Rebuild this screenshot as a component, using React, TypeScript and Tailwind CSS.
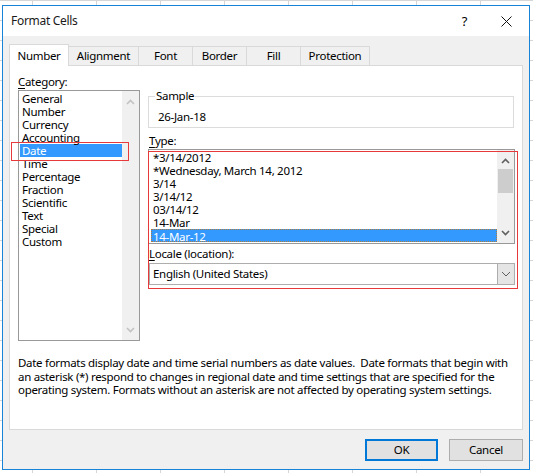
import React from 'react';

const categories = [
  'General',
  'Number',
  'Currency',
  'Accounting',
  'Date',
  'Time',
  'Percentage',
  'Fraction',
  'Scientific',
  'Text',
  'Special',
  'Custom',
];

const dateTypes = [
  '*3/14/2012',
  '*Wednesday, March 14, 2012',
  '3/14',
  '3/14/12',
  '03/14/12',
  '14-Mar',
  '14-Mar-12',
];

const tabs = ['Number', 'Alignment', 'Font', 'Border', 'Fill', 'Protection'];
const tabWidths: Record<string, string> = {
  Number: 'w-[60px]',
  Alignment: 'w-[70px]',
  Font: 'w-[54px]',
  Border: 'w-[54px]',
  Fill: 'w-[54px]',
  Protection: 'w-[69px]',
};

const Chevron = ({ up, color }: { up?: boolean; color: string }) => (
  <svg width="9" height="6" viewBox="0 0 9 6">
    <polyline
      points={up ? '1,5 4.5,1.5 8,5' : '1,1 4.5,4.5 8,1'}
      fill="none"
      stroke={color}
      strokeWidth="1.6"
    />
  </svg>
);

const ScrollBar = ({ disabled }: { disabled?: boolean }) => {
  const color = disabled ? '#c2c2c2' : '#5f5f5f';
  return (
    <div className="flex w-[17px] flex-col bg-[#f0f0f0]">
      <div className="flex h-[19px] items-center justify-center pt-[2px]">
        <Chevron up color={color} />
      </div>
      {!disabled && <div className="mx-[1px] h-[24px] bg-[#cdcdcd]" />}
      <div className="flex-1" />
      <div className="flex h-[19px] items-center justify-center pb-[2px]">
        <Chevron color={color} />
      </div>
    </div>
  );
};

const App = () => {
  return (
    <div className="relative h-[473px] w-[533px] overflow-hidden bg-white bg-[linear-gradient(to_right,#d6d6d6_1px,transparent_1px),linear-gradient(to_bottom,#d6d6d6_1px,transparent_1px)] bg-size-[64px_20px] bg-position-[32px_0px] pl-[2px] pt-[5px] font-['Noto_Sans',sans-serif] text-[11.5px] tracking-[-0.3px] text-black">
      <div className="flex h-[465px] w-[528px] flex-col border border-[#1883d7] bg-[#f0f0f0]">
        {/* title bar */}
        <div className="flex h-[30px] items-center bg-white pl-[8px]">
          <span className="text-[12px] leading-none text-[#1a1a1a]">Format Cells</span>
          <span className="ml-auto mr-[34px] text-[13px] leading-none">?</span>
          <svg className="mr-[17px]" width="11" height="11" viewBox="0 0 11 11">
            <path d="M0.5 0.5 L10.5 10.5 M10.5 0.5 L0.5 10.5" stroke="#111" strokeWidth="1" />
          </svg>
        </div>

        <div className="flex-1 pl-[6px] pt-[8px]">
          {/* tabs */}
          <div className="flex h-[21px] items-start">
            {tabs.map((t, i) =>
              i === 0 ? (
                <div
                  key={t}
                  className={`relative z-10 flex h-[22px] items-center justify-center border-x border-t border-[#d9d9d9] bg-white ${tabWidths[t]}`}
                >
                  {t}
                </div>
              ) : (
                <div
                  key={t}
                  className={`mt-[2px] flex h-[19px] items-center justify-center border-r border-t border-[#d9d9d9] bg-[#f0f0f0] ${tabWidths[t]}`}
                >
                  {t}
                </div>
              )
            )}
          </div>

          {/* panel */}
          <div className="h-[365px] w-[514px] border border-[#d9d9d9] bg-white pl-[8px]">
            <div className="flex">
              {/* category column */}
              <div className="w-[122px] pt-[8px]">
                <div className="h-[15px] leading-[15px]">
                  <u className="underline-offset-2">C</u>ategory:
                </div>
                <div className="mt-[1px] flex h-[251px] border border-[#999999]">
                  <div className="flex-1 pl-[1px] pt-[1px]">
                    {categories.map((c) => (
                      <div
                        key={c}
                        className={`h-[13px] px-[2px] leading-[13px] ${c === 'Date' ? 'bg-[#3399ff] text-white' : ''}`}
                      >
                        {c}
                      </div>
                    ))}
                  </div>
                  <ScrollBar disabled />
                </div>
              </div>

              {/* right column */}
              <div className="ml-[8px] w-[367px] pt-[30px]">
                <div className="relative h-[32px] w-[366px] border border-[#dcdcdc] pl-[9px] pt-[13px]">
                  <span className="absolute -top-[8px] left-[6px] bg-white px-[1px] leading-[14px]">Sample</span>
                  <div className="leading-[14px]">26-Jan-18</div>
                </div>

                <div className="mt-[6px] h-[14px] pl-[1px] leading-[14px]">
                  <u className="underline-offset-2">T</u>ype:
                </div>
                <div className="mt-[1px] flex h-[95px] w-[367px] border border-[#999999]">
                  <div className="flex-1 pl-[2px] pt-[1px]">
                    {dateTypes.map((d, i) => (
                      <div
                        key={d}
                        className={`h-[13px] px-[2px] leading-[13px] ${
                          i === dateTypes.length - 1
                            ? 'border border-dotted border-[#b07a3a] bg-[#3399ff] pl-[1px] leading-[11px] text-white'
                            : ''
                        }`}
                      >
                        {d}
                      </div>
                    ))}
                  </div>
                  <ScrollBar />
                </div>

                <div className="mt-[3px] h-[14px] pl-[1px] leading-[14px]">
                  <u className="underline-offset-2">L</u>ocale (location):
                </div>
                <div className="ml-[1px] mt-[2px] flex h-[22px] w-[366px] border border-[#adadad]">
                  <div className="flex flex-1 items-center pl-[3px]">English (United States)</div>
                  <div className="flex w-[17px] items-center justify-center border-l border-[#adadad] bg-[#e5e5e5]">
                    <svg width="10" height="6" viewBox="0 0 10 6">
                      <polyline points="1,1 5,5 9,1" fill="none" stroke="#606060" strokeWidth="1" />
                    </svg>
                  </div>
                </div>
              </div>
            </div>

            <p className="mt-[15px] whitespace-nowrap leading-[13.5px]">
              Date formats display date and time serial numbers as date values.&nbsp; Date formats that begin with
              <br />
              an asterisk (*) respond to changes in regional date and time settings that are specified for the
              <br />
              operating system. Formats without an asterisk are not affected by operating system settings.
            </p>
          </div>

          {/* buttons */}
          <div className="mt-[9px] flex justify-end gap-[11px] pr-[6px]">
            <button className="h-[22px] w-[73px] border-2 border-[#0078d7] bg-[#e1e1e1]">OK</button>
            <button className="h-[22px] w-[74px] border border-[#adadad] bg-[#e1e1e1]">Cancel</button>
          </div>
        </div>
      </div>

      {/* highlight annotations */}
      <div className="pointer-events-none absolute left-[11px] top-[142px] h-[19px] w-[118px] border border-[#e8393a]" />
      <div className="pointer-events-none absolute left-[148px] top-[151px] h-[138px] w-[370px] border border-[#e8393a]" />
    </div>
  );
};

export default App;
